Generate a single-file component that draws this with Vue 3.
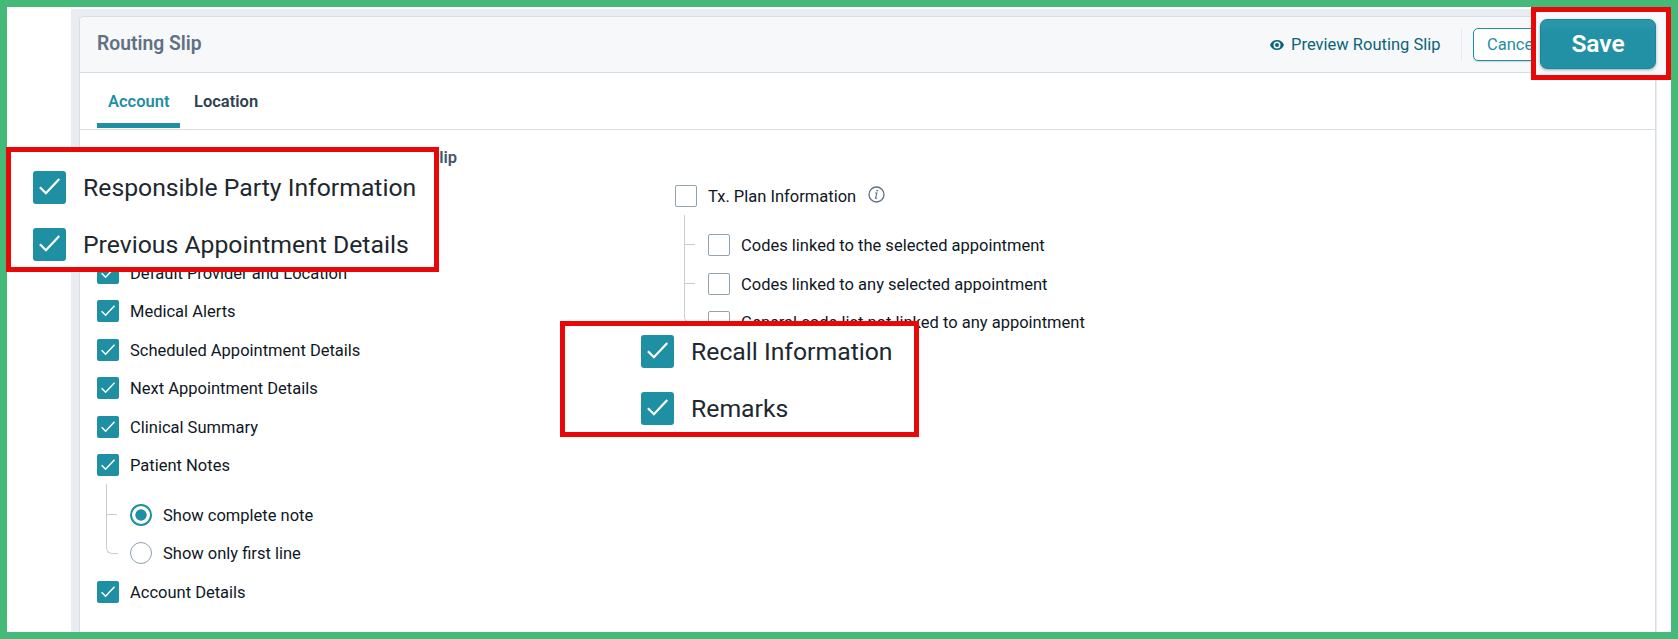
<script setup>
const left = ['Default Provider and Location', 'Medical Alerts', 'Scheduled Appointment Details', 'Next Appointment Details', 'Clinical Summary', 'Patient Notes']
const codes = ['Codes linked to the selected appointment', 'Codes linked to any selected appointment', 'General code list not linked to any appointment']
const callouts = [
  { name: 'party', items: ['Responsible Party Information', 'Previous Appointment Details'] },
  { name: 'recall', items: ['Recall Information', 'Remarks'] },
]
</script>

<template>
  <div class="frame">
    <main class="page">
      <section class="panel">
        <header class="head">
          <h1>Routing Slip</h1>
          <a class="preview">
            <svg width="14" height="10" viewBox="0 0 14 10"><path fill="#0b6478" fill-rule="evenodd" d="M0 5C1.4 1.8 3.9 0 7 0s5.600 1.800 7 5c-1.400 3.200-3.900 5-7 5S1.400 8.200 0 5zm7-3.500a3.500 3.500 0 1 0 0 7 3.500 3.500 0 0 0 0-7zM7 3a2 2 0 1 1 0 4 2 2 0 0 1 0-4z" /></svg>
            <span>Preview Routing Slip</span>
          </a>
          <i class="divider"></i>
          <button class="cancel">Cancel</button>
        </header>
        <nav class="tabs">
          <a class="tab active">Account</a>
          <a class="tab">Location</a>
        </nav>
        <div class="body">
          <div class="col">
            <h2>Slip</h2>
            <div v-for="t in left" :key="t" class="row">
              <span class="box on"><svg viewBox="0 0 22 22"><path d="M4.600 11.200l4 4L17.500 5.800" /></svg></span>
              <span class="label">{{ t }}</span>
            </div>
            <div class="tree notes">
              <div class="row branch"><span class="radio on"></span><span class="label">Show complete note</span></div>
              <div class="row branch"><span class="radio"></span><span class="label">Show only first line</span></div>
            </div>
            <div class="row">
              <span class="box on"><svg viewBox="0 0 22 22"><path d="M4.600 11.200l4 4L17.500 5.800" /></svg></span>
              <span class="label">Account Details</span>
            </div>
          </div>
          <div class="col second">
            <div class="row">
              <span class="box"></span><span class="label">Tx. Plan Information</span>
              <svg class="info" width="17" height="17" viewBox="0 0 17 17"><circle cx="8.500" cy="8.500" r="7.500" fill="none" stroke="#5f7183" stroke-width="1.300" /><path d="M7 7h1.900l-1.400 5.300h1.700" fill="none" stroke="#5f7183" stroke-width="1.100" /><circle cx="9.200" cy="4.600" r=".9" fill="#5f7183" /></svg>
            </div>
            <div class="tree plan">
              <div v-for="t in codes" :key="t" class="row branch"><span class="box"></span><span class="label">{{ t }}</span></div>
            </div>
          </div>
        </div>
      </section>
    </main>
    <aside v-for="c in callouts" :key="c.name" class="callout" :class="c.name">
      <div v-for="t in c.items" :key="t" class="big">
        <span class="box on"><svg viewBox="0 0 22 22"><path d="M4.600 10.800l4 4L17.500 5.400" /></svg></span>
        <span>{{ t }}</span>
      </div>
    </aside>
    <aside class="callout save"><button>Save</button></aside>
  </div>
</template>

<style scoped>
* { box-sizing: border-box; }
.frame { position: relative; width: 1678px; height: 639px; border: 7px solid #45b978; background: #fff; font: 16.5px/22px Roboto, "Liberation Sans", sans-serif; color: #0f171f; }
.frame::before { content: ""; display: block; height: 2px; }
.page { margin: 0 14px 0 64px; height: 623px; padding: 7px 1px 0 8px; background: #e9edf1; }
.panel { height: 616px; background: #fff; border: 1px solid #d5dde5; border-bottom: 0; border-radius: 5px 5px 0 0; }
.head { height: 56px; display: flex; align-items: center; background: #f7f8fa; border-bottom: 1px solid #d5dde5; border-radius: 4px 4px 0 0; padding-left: 17px; }
h1 { margin: 0 0 1px; font-size: 19.300px; font-weight: 600; color: #5f7183; }
.preview { display: flex; align-items: center; gap: 7px; margin-left: auto; color: #0b6478; }
.divider { width: 1px; height: 33px; margin: 0 11px 0 20.5px; background: #e5eaef; }
.cancel { width: 90px; height: 33px; margin-right: 92px; padding: 0 0 0 13px; text-align: left; border: 1px solid #1f8fa3; border-radius: 5px; background: #fff; color: #1f8fa3; font: inherit; box-shadow: 0 1px 1px #ccd5dc; }
.tabs { height: 57px; display: flex; padding-left: 17px; border-bottom: 1px solid #d5dde5; }
.tab { height: 55px; padding: 18px 11px 0; font-weight: 600; color: #2f4050; }
.tab.active { width: 83px; margin-right: 3px; color: #1f8fa3; border-bottom: 5px solid #1f8fa3; }
.body { display: flex; padding-left: 17px; }
.col { width: 578px; }
h2 { margin: 17px 0 85px; width: 360px; text-align: right; font-size: 16.5px; line-height: 22px; font-weight: 600; color: #44566a; }
.row { height: 38px; padding-top: 8px; display: flex; align-items: flex-start; gap: 11px; white-space: nowrap; }
.col > .row:nth-child(3), .col > .row:nth-child(5), .notes .row:nth-child(2), .plan .row:first-child { height: 39px; }
.label { margin-top: 1px; }
.box { width: 22px; height: 22px; flex: none; border: 1px solid #8fa1b3; border-radius: 2px; background: #fff; }
.box.on { border: 0; background: #1f8fa3; }
.box svg { display: block; width: 100%; height: 100%; }
.box path { fill: none; stroke: #fff; stroke-width: 1.5; }
.radio { width: 22px; height: 22px; flex: none; border: 1px solid #8fa1b3; border-radius: 50%; }
.radio.on { border: 2px solid #1f8fa3; background: radial-gradient(circle, #1f8fa3 5.300px, #fff 6px); }
.tree { position: relative; padding-left: 33px; }
.tree::before { content: ""; position: absolute; left: 9px; top: 0; width: 11px; border: solid #c8cdd2; border-width: 0 0 1px 1px; border-radius: 0 0 0 6px; }
.notes { padding-top: 12px; }
.plan { padding-top: 11px; }
.notes::before { height: 69px; }
.plan::before { height: 107px; }
.branch { position: relative; }
.branch:not(:last-child)::before { content: ""; position: absolute; left: -24px; top: 18px; width: 11px; height: 1px; background: #c8cdd2; }
.second { padding-top: 47px; }
.info { margin: 1px 0 0 1px; }
.callout { position: absolute; border: 5px solid #e90808; background: #fff; }
.party { left: -1px; top: 140px; width: 433px; height: 125px; padding: 7px 0 0 22px; }
.recall { left: 553px; top: 314px; width: 359px; height: 116px; padding: 0 0 0 76px; }
.recall .big { position: relative; top: -3px; }
.big { height: 57px; display: flex; align-items: center; gap: 17px; font-size: 24.750px; line-height: 32px; color: #20272f; white-space: nowrap; }
.big .box { width: 33px; height: 33px; border-radius: 3px; }
.save { left: 1524px; top: 0; width: 140px; height: 73px; padding: 7px 4px; background: #f7f8fa; }
.save button { display: block; width: 116px; height: 50px; padding: 0 0 1px; border: 1px solid #18869a; border-radius: 7px; background: linear-gradient(#2c97aa, #2291a5 30%); color: #fff; font: 600 24.500px/32px Roboto, sans-serif; box-shadow: 0 1px 3px #9eabb4; }
</style>

<style>
body { margin: 0; }
</style>
